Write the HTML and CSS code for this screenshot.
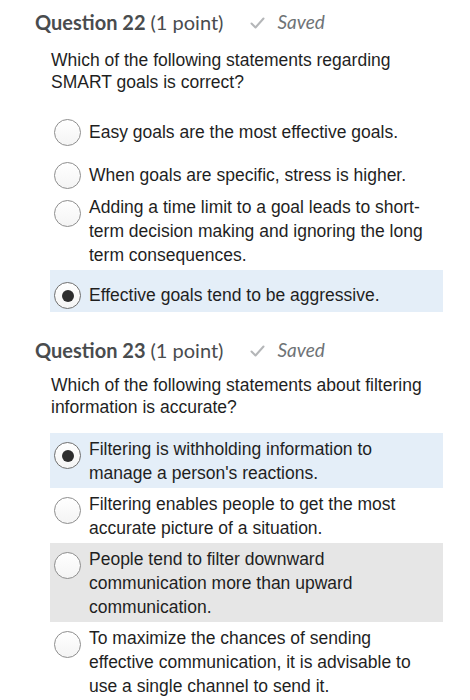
FILE: index.html
```html
<!DOCTYPE html>
<html>
<head>
<meta charset="utf-8">
<link rel="stylesheet" href="styles.css">
</head>
<body>
<div class="page">
  <section class="question q22">
    <h2 class="q-head"><span class="q-num">Question 22</span> <span class="q-pts">(1 point)</span>
      <span class="saved"><svg class="check" width="15" height="12" viewBox="0 0 15 12"><path d="M1.5 6.5 L5.5 10.5 L13.5 1.5" fill="none" stroke="#b4b6b8" stroke-width="2" stroke-linecap="round" stroke-linejoin="round"/></svg><em>Saved</em></span>
    </h2>
    <p class="q-text">Which of the following statements regarding<br>SMART goals is correct?</p>
    <div class="options">
      <div class="opt o1"><span class="radio"></span><span class="opt-text">Easy goals are the most effective goals.</span></div>
      <div class="opt o2"><span class="radio"></span><span class="opt-text">When goals are specific, stress is higher.</span></div>
      <div class="opt o3 multi"><span class="radio"></span><span class="opt-text">Adding a time limit to a goal leads to short-<br>term decision making and ignoring the long<br>term consequences.</span></div>
      <div class="opt o4 selected"><span class="radio on"></span><span class="opt-text">Effective goals tend to be aggressive.</span></div>
    </div>
  </section>
  <section class="question q23">
    <h2 class="q-head"><span class="q-num">Question 23</span> <span class="q-pts">(1 point)</span>
      <span class="saved"><svg class="check" width="15" height="12" viewBox="0 0 15 12"><path d="M1.5 6.5 L5.5 10.5 L13.5 1.5" fill="none" stroke="#b4b6b8" stroke-width="2" stroke-linecap="round" stroke-linejoin="round"/></svg><em>Saved</em></span>
    </h2>
    <p class="q-text">Which of the following statements about filtering<br>information is accurate?</p>
    <div class="options tight">
      <div class="opt multi selected"><span class="radio on"></span><span class="opt-text">Filtering is withholding information to<br>manage a person's reactions.</span></div>
      <div class="opt multi"><span class="radio"></span><span class="opt-text">Filtering enables people to get the most<br>accurate picture of a situation.</span></div>
      <div class="opt multi hover"><span class="radio"></span><span class="opt-text">People tend to filter downward<br>communication more than upward<br>communication.</span></div>
      <div class="opt multi"><span class="radio"></span><span class="opt-text">To maximize the chances of sending<br>effective communication, it is advisable to<br>use a single channel to send it.</span></div>
    </div>
  </section>
</div>
</body>
</html>
```

FILE: styles.css
```css
* { box-sizing: border-box; }
html, body { margin: 0; padding: 0; background: #ffffff; }
.page { padding: 10px 0 0 35px; width: 470px; }
.question { display: flex; flex-direction: column; }
.q-head {
  margin: 0;
  font-family: Lato, "Open Sans", sans-serif;
  font-size: 20px;
  line-height: 24px;
  font-weight: 400;
  color: #494c4e;
  display: flex;
  align-items: center;
  white-space: nowrap;
}
.q-num { font-weight: 700; margin-right: 5px; }
.q-pts { font-weight: 400; }
.saved {
  display: inline-flex;
  align-items: center;
  margin-left: 27px;
  color: #6e7376;
  font-size: 19px;
}
.check { margin-right: 12px; margin-top: 1px; }
.saved em { font-style: italic; }
.q-text {
  margin: 15px 0 0 16px;
  font-family: "Liberation Sans", Arial, sans-serif;
  font-size: 17.5px;
  line-height: 22px;
  color: #1f1f1f;
  white-space: nowrap;
}
.options {
  display: flex;
  flex-direction: column;
  margin: 23px 0 0 15px;
  width: 393px;
}
.opt {
  display: flex;
  align-items: flex-start;
  padding: 4px 4px 3px 4px;
  font-family: "Liberation Sans", Arial, sans-serif;
  font-size: 17.5px;
  line-height: 24px;
  color: #1f1f1f;
  white-space: nowrap;
}
.opt-text { flex: 1; }
.radio {
  flex: none;
  width: 27px;
  height: 27px;
  border-radius: 50%;
  border: 1px solid #8e8e8e;
  background: linear-gradient(#ffffff, #f4f4f4);
  margin: -1px 8px 0 0;
  display: flex;
  align-items: center;
  justify-content: center;
}
.multi .radio { margin-top: 5px; }
.radio.on { border-color: #6f6f6f; }
.radio.on::after {
  content: "";
  width: 12px;
  height: 12px;
  border-radius: 50%;
  background: #2e2e2e;
}
.o2 { margin-top: 10px; }
.o3 { margin-top: -1px; }
.o4 { padding-top: 13px; }
.selected { background: #e4eef8; }
.hover { background: #e6e6e6; }
.q23 { margin-top: 26px; }
.q23 .q-text { margin-top: 12px; }
.q23 .options { margin-top: 15px; }
```
